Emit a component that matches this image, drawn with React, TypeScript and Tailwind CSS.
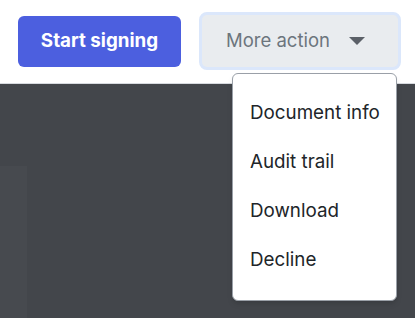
import React from "react";

const items = ["Document info", "Audit trail", "Download", "Decline"];

export default function App() {
  return (
    <div className="relative h-[318px] w-[415px] overflow-hidden bg-[#43464b] font-['Inter',sans-serif]">
      <div className="flex h-[84px] items-start gap-[18px] border-b border-[#d7dadf] bg-white pl-[18px] pt-[12px]">
        <button className="mt-[4px] h-[51px] w-[163px] rounded-[6px] bg-[#4c5fdf] text-[18.8px] font-bold text-white">
          Start signing
        </button>
        <button className="flex h-[58px] w-[202px] items-center rounded-[8px] border-[3px] border-[#dbe7fb] bg-[#e9ecef] pl-[24px] text-[18.5px] text-[#6c757d]">
          More action
          <svg width="16" height="8" viewBox="0 0 16 8" className="ml-[19px]">
            <path d="M0 0h16L8 8z" fill="#5b6068" />
          </svg>
        </button>
      </div>
      <div className="flex">
        <div className="mt-[82px] h-[200px] w-[27px] bg-[#474a4f]" />
      </div>
      <div className="absolute left-[232px] top-[73px] w-[165px] rounded-[6px] border border-[#9aa0a8] bg-white py-[15px] shadow-md">
        {items.map((t) => (
          <div key={t} className="flex h-[49px] items-center pl-[17px] text-[18.8px] text-[#212529]">
            {t}
          </div>
        ))}
      </div>
    </div>
  );
}
